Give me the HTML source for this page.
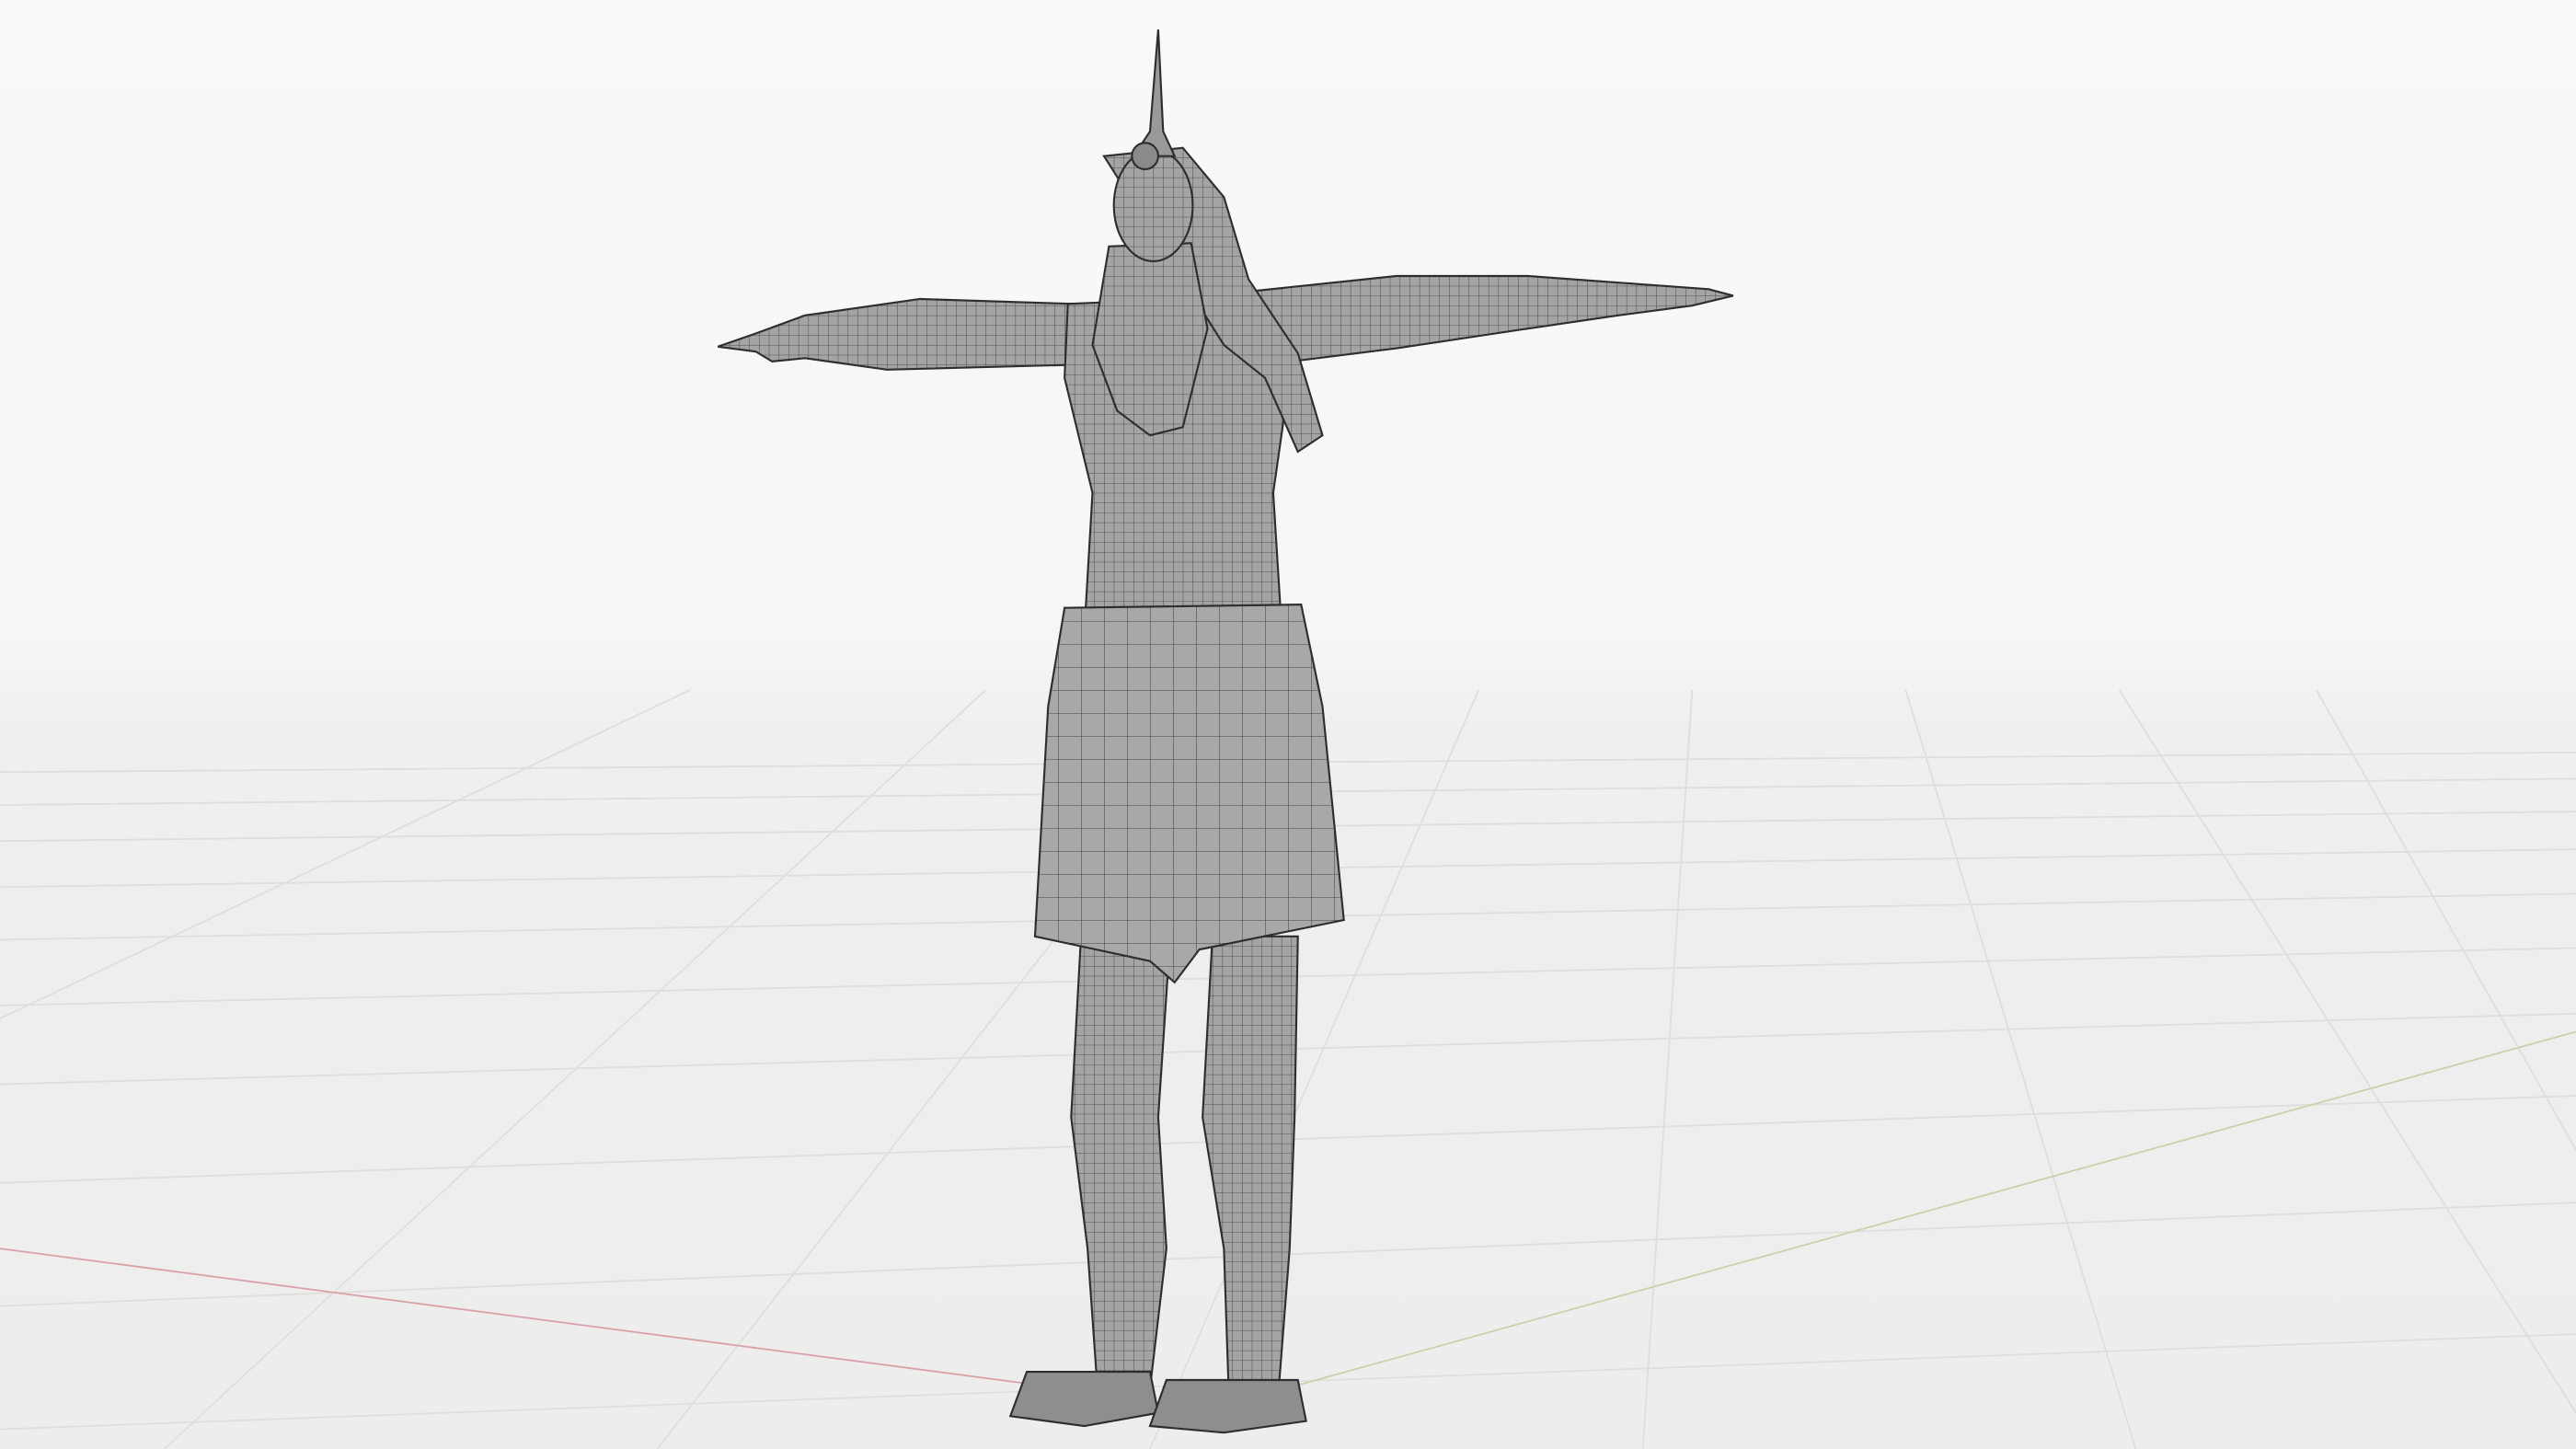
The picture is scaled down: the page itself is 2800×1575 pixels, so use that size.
<!DOCTYPE html>
<html><head><style>html,body{margin:0;padding:0;width:2800px;height:1575px;overflow:hidden;background:#f7f7f7}</style></head>
<body>
<svg width="2800" height="1575" viewBox="0 0 1568 882" xmlns="http://www.w3.org/2000/svg">
<defs>
<linearGradient id="bg" x1="0" y1="0" x2="0" y2="1">
<stop offset="0" stop-color="#f9f9f9"/><stop offset="0.44" stop-color="#f6f6f6"/><stop offset="0.5" stop-color="#efefef"/><stop offset="1" stop-color="#ededed"/>
</linearGradient>
<pattern id="mesh" width="6" height="6" patternUnits="userSpaceOnUse">
<rect width="6" height="6" fill="#a4a4a4"/>
<path d="M0 0H6M0 0V6" stroke="#3a3a3a" stroke-width="0.6" opacity="0.8"/>
</pattern>
<pattern id="mesh2" width="14" height="14" patternUnits="userSpaceOnUse">
<rect width="14" height="14" fill="#a8a8a8"/>
<path d="M0 0H14M0 0V14" stroke="#444" stroke-width="0.6"/>
</pattern>
</defs>
<rect width="1568" height="882" fill="url(#bg)"/>
<g stroke="#dedede" stroke-width="1" fill="none">
<path d="M0 470L1568 458M0 490L1568 474M0 512L1568 494M0 540L1568 517M0 572L1568 544M0 612L1568 577M0 660L1568 617M0 720L1568 667M0 795L1568 732M0 870L1568 812"/>
<path d="M0 620L420 420M100 882L600 420M400 882L760 420M700 882L900 420M1000 882L1030 420M1300 882L1160 420M1568 860L1290 420M1568 700L1410 420"/>
</g>
<path d="M0 760L700 852" stroke="#d9a0a8" stroke-width="1"/>
<path d="M700 868L1568 628" stroke="#c7d3a8" stroke-width="1"/>
<g stroke="#2e2e2e" stroke-width="1.2">
<path d="M655 185L560 182L490 192L460 203L437 211L460 214L470 220L490 218L540 225L655 222Z" fill="url(#mesh)"/>
<path d="M755 178L850 168L930 168L985 172L1040 176L1055 180L1030 186L985 192L930 200L850 212L770 222Z" fill="url(#mesh)"/>
<path d="M650 185L765 180L785 230L775 300L780 380L660 385L665 300L648 230Z" fill="url(#mesh)"/>
<path d="M672 95L720 90L745 120L760 170L790 215L805 265L790 275L770 230L745 210Z" fill="url(#mesh)"/>
<path d="M675 150L725 148L735 200L720 260L700 265L680 250L665 210Z" fill="url(#mesh)"/>
<ellipse cx="702" cy="125" rx="24" ry="34" fill="url(#mesh)"/>
<path d="M705 18L700 80L690 95L715 95L708 80Z" fill="#9a9a9a"/>
<circle cx="697" cy="95" r="8" fill="#8a8a8a"/>
<path d="M658 570L712 575L705 680L710 760L700 845L668 845L662 760L652 680Z" fill="url(#mesh)"/>
<path d="M738 570L790 570L788 680L785 760L778 850L748 850L745 760L732 680Z" fill="url(#mesh)"/>
<path d="M648 370L792 368L805 430L818 560L730 578L715 598L700 585L630 570L638 430Z" fill="url(#mesh2)"/>
<path d="M625 835L700 835L705 860L660 868L615 862Z" fill="#8e8e8e"/>
<path d="M710 840L790 840L795 865L745 872L700 868Z" fill="#8e8e8e"/>
</g>
</svg>
</body></html>
